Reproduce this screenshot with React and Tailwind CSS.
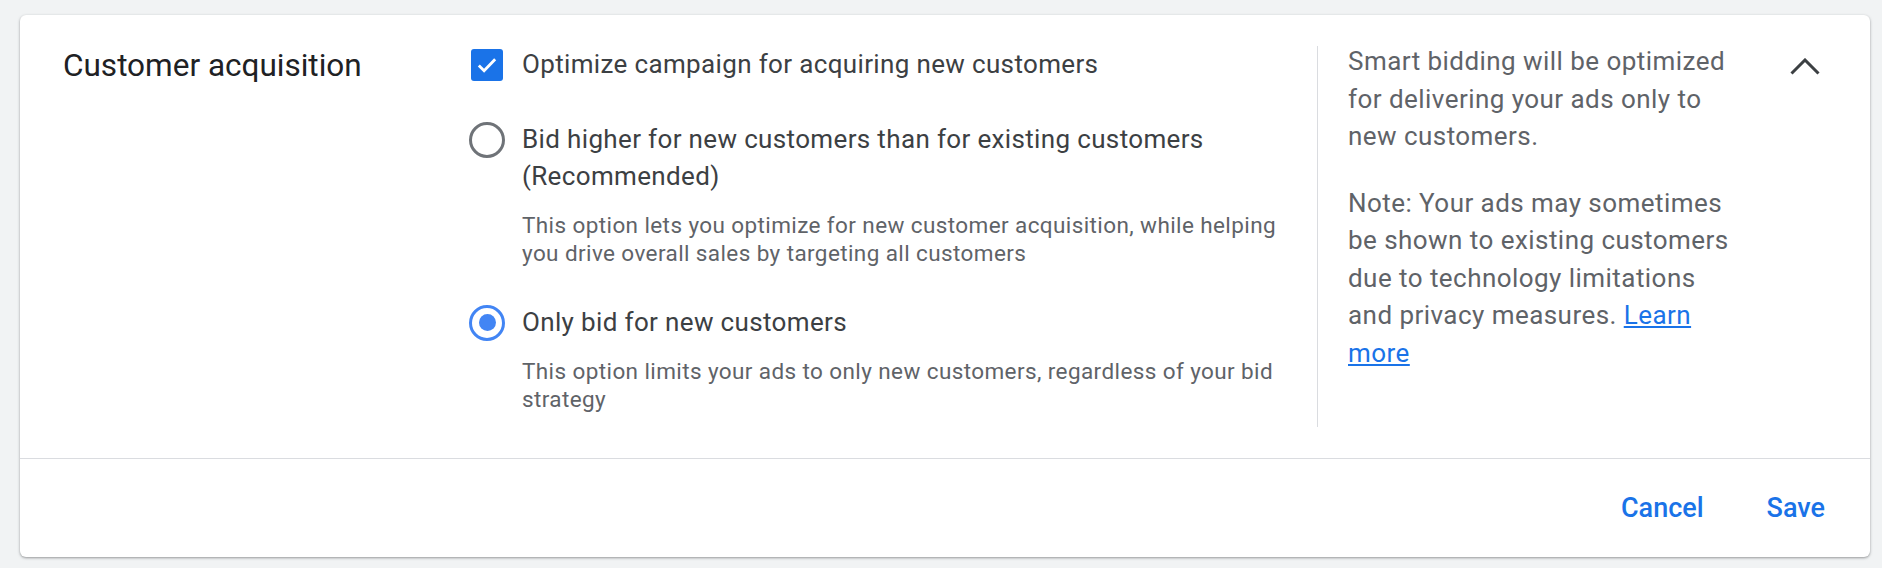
const font = { fontFamily: "Roboto, 'Liberation Sans', sans-serif" };

function Checkbox() {
  return (
    <span className="flex h-[32px] w-[32px] shrink-0 items-center justify-center rounded-[3px] bg-[#1a73e8]">
      <svg viewBox="0 0 24 24" className="h-[28px] w-[28px]" fill="none" stroke="white" strokeWidth="2.4">
        <path d="M5 12.5l4.5 4.5L19 7" />
      </svg>
    </span>
  );
}

function Radio({ checked }) {
  return checked ? (
    <span className="flex h-[36px] w-[36px] shrink-0 items-center justify-center rounded-full border-[3.5px] border-[#4285f4]">
      <span className="h-[17px] w-[17px] rounded-full bg-[#4285f4]" />
    </span>
  ) : (
    <span className="h-[36px] w-[36px] shrink-0 rounded-full border-[3px] border-[#6f7378]" />
  );
}

function Option({ control, label, desc }) {
  return (
    <div className="flex gap-[17px]">
      <div className="flex h-[37px] w-[36px] shrink-0 items-center justify-center">{control}</div>
      <div className="w-[770px]">
        <p className="text-[26px] leading-[37px] tracking-[0.35px] text-[#3c4043]">{label}</p>
        {desc && <p className="mt-[16px] text-[22.5px] leading-[28px] tracking-[0.4px] text-[#5f6368]">{desc}</p>}
      </div>
    </div>
  );
}

export default function App() {
  return (
    <div className="min-h-[568px] bg-[#f1f3f4] px-[20px] pt-[15px]" style={font}>
      <div className="w-[1850px] rounded-[6px] bg-white shadow-[0_1px_3px_rgba(60,64,67,0.35),0_1px_2px_rgba(60,64,67,0.2)]">
        <div className="flex pl-[43px] pt-[31px] pb-[31px]">
          <h2 className="w-[406px] shrink-0 pt-[1px] text-[31.5px] leading-[37px] text-[#202124]">Customer acquisition</h2>
          <div className="shrink-0 pb-[14px]">
            <Option control={<Checkbox />} label="Optimize campaign for acquiring new customers" />
            <div className="mt-[38px]">
              <Option
                control={<Radio />}
                label="Bid higher for new customers than for existing customers (Recommended)"
                desc="This option lets you optimize for new customer acquisition, while helping you drive overall sales by targeting all customers"
              />
            </div>
            <div className="mt-[37px]">
              <Option
                control={<Radio checked />}
                label="Only bid for new customers"
                desc="This option limits your ads to only new customers, regardless of your bid strategy"
              />
            </div>
          </div>
          <div className="ml-[25px] flex flex-1 border-l border-[#dadce0] pl-[30px] pr-[50px]">
            <div className="-mt-[3px] w-[390px] text-[26px] leading-[37.5px] tracking-[0.45px] text-[#5f6368]">
              <p>Smart bidding will be optimized for delivering your ads only to new customers.</p>
              <p className="mt-[29px]">
                Note: Your ads may sometimes be shown to existing customers due to technology limitations and privacy measures.{" "}
                <a className="text-[#1a73e8] underline">Learn more</a>
              </p>
            </div>
            <div className="ml-auto pt-[12px]">
              <svg viewBox="0 0 30 17" className="h-[17px] w-[30px]" fill="none" stroke="#3c4043" strokeWidth="3">
                <path d="M1.5 15.5L15 2l13.5 13.5" />
              </svg>
            </div>
          </div>
        </div>
        <div className="flex h-[99px] items-center justify-end gap-[63px] border-t border-[#dadce0] pr-[45px]">
          <button className="text-[27px] font-medium text-[#1a73e8]">Cancel</button>
          <button className="text-[27px] font-medium text-[#1a73e8]">Save</button>
        </div>
      </div>
    </div>
  );
}
